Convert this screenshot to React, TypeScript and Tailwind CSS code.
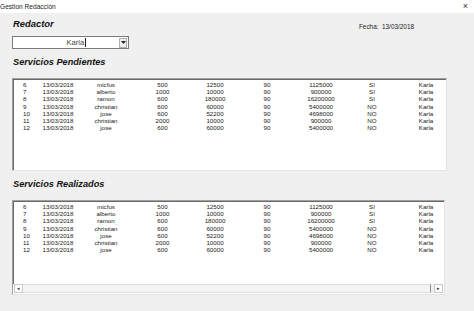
const rows = [
  ["6", "13/03/2018", "micfus", "500", "12500", "90", "1125000", "SI", "Karla"],
  ["7", "13/03/2018", "alberto", "1000", "10000", "90", "900000", "SI", "Karla"],
  ["8", "13/03/2018", "ramon", "600", "180000", "90", "16200000", "SI", "Karla"],
  ["9", "13/03/2018", "christian", "600", "60000", "90", "5400000", "NO", "Karla"],
  ["10", "13/03/2018", "jose", "600", "52200", "90", "4698000", "NO", "Karla"],
  ["11", "13/03/2018", "christian", "2000", "10000", "90", "900000", "NO", "Karla"],
  ["12", "13/03/2018", "jose", "600", "60000", "90", "5400000", "NO", "Karla"],
];

// fixed column widths, px, measured off the form
const cols = [
  "w-[26px] text-left pl-[9px]",
  "w-[36px] text-center",
  "w-[60px] text-center",
  "w-[53px] text-center",
  "w-[52px] text-center",
  "w-[52px] text-center",
  "w-[56px] text-center",
  "w-[46px] text-center",
  "w-[62px] text-center",
];

function ListBox({ scroll }: { scroll?: boolean }) {
  return (
    <div className="flex flex-col bg-white border border-t-[#a0a0a0] border-l-[#a0a0a0] border-r-[#e3e3e3] border-b-[#e3e3e3] h-full">
      <div className="flex-1 pt-[1px] border-t border-l border-t-[#696969] border-l-[#696969]">
        {rows.map((r, i) => (
          <div key={i} className="flex h-[7.2px] items-center text-[6.2px] leading-[7.2px] text-[#1a1a1a]">
            {r.map((c, j) => (
              <div key={j} className={`${cols[j]} shrink-0 whitespace-nowrap`}>
                {c}
              </div>
            ))}
          </div>
        ))}
      </div>
      {scroll && (
        <div className="flex h-[9px] mb-[1px] ml-[1px] mr-[1px] bg-[#f0f0f0] items-stretch">
          <div className="w-[9px] border border-[#c8c8c8] bg-white flex items-center justify-center text-[5px] leading-none text-[#333]">
            ◂
          </div>
          <div className="flex-1 border-t border-b border-[#dcdcdc] border-r border-r-[#8c8c8c] bg-[#f4f4f4]" />
          <div className="w-[3px]" />
          <div className="w-[9px] border border-[#c8c8c8] bg-white flex items-center justify-center text-[5px] leading-none text-[#333]">
            ▸
          </div>
        </div>
      )}
    </div>
  );
}

export default function App() {
  return (
    <div
      className="w-[474px] h-[311px] bg-[#f0f0f0] flex flex-col overflow-hidden"
      style={{ fontFamily: '"Liberation Sans", Arial, sans-serif' }}
    >
      {/* title bar */}
      <div className="h-[13px] bg-white flex items-center justify-between shrink-0">
        <span className="text-[6.6px] text-[#222]">Gestion Redacción</span>
        <span className="text-[9px] leading-none text-[#333] mr-[6px] font-light">×</span>
      </div>

      <div className="flex flex-col pl-[12px] pr-[27px]">
        <div className="flex justify-between items-start mt-[5px] h-[12px]">
          <span className="text-[9.4px] font-bold italic text-[#111] pl-[1px] leading-[12px]">Redactor</span>
          <span className="text-[6.4px] text-[#222] mt-[4px] mr-[33px]">Fecha:&nbsp;&nbsp;13/03/2018</span>
        </div>

        {/* redactor combo */}
        <div className="mt-[6px] w-[117px] h-[13px] bg-white border border-[#7a7a7a] flex items-center">
          <div className="flex-1 flex justify-center items-center text-[7.6px] text-[#444] pl-[20px]">
            Karla<span className="w-[1px] h-[9px] bg-[#222] ml-[0.5px]" />
          </div>
          <div className="w-[8px] h-[10px] mr-[1px] bg-[#f0f0f0] border border-[#b0b0b0] flex items-center justify-center">
            <svg width="5" height="3" viewBox="0 0 5 3">
              <path d="M0 0h5L2.5 3z" fill="#222" />
            </svg>
          </div>
        </div>

        <div className="mt-[8px] h-[11px] text-[9.2px] font-bold italic text-[#111] pl-[1px] leading-[11px]">
          Servicios Pendientes
        </div>
        <div className="mt-[10px] h-[93px]">
          <ListBox />
        </div>

        <div className="mt-[8px] h-[11px] text-[9.2px] font-bold italic text-[#111] pl-[1px] leading-[11px]">
          Servicios Realizados
        </div>
        <div className="mt-[10px] h-[95px] pr-[2px]">
          <ListBox scroll />
        </div>
      </div>
    </div>
  );
}
